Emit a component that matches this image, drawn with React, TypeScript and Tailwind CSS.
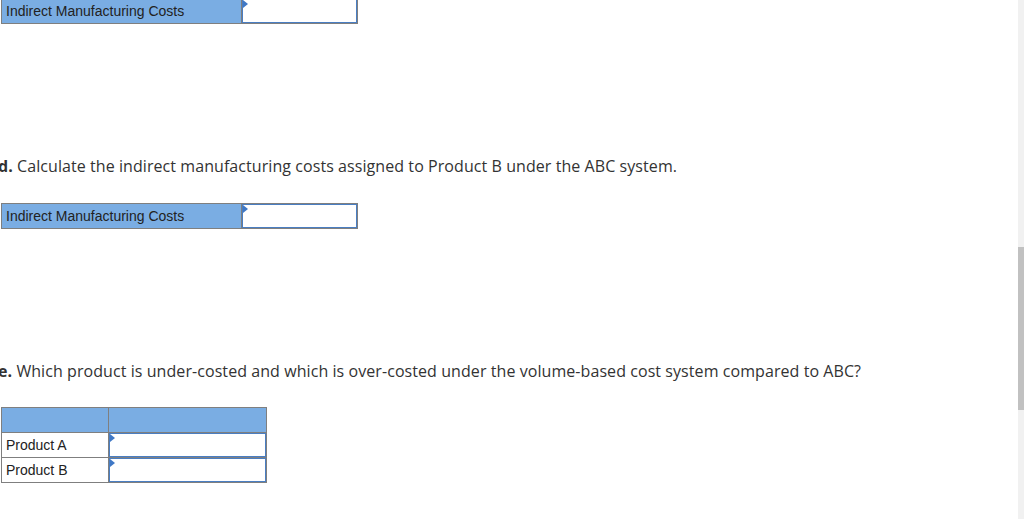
import React from "react";

function InputCell({ className = "" }: { className?: string }) {
  return (
    <td className={`p-0 border border-[#7f7f7f] bg-white ${className}`}>
      <div className="relative h-full w-full border border-[#4a7ec2] bg-white">
        <span className="absolute left-0 top-0 h-0 w-0 border-y-[4px] border-l-[5px] border-y-transparent border-l-[#3f78c6]" />
      </div>
    </td>
  );
}

function SingleRow({ className = "" }: { className?: string }) {
  return (
    <table className={`border-collapse ${className}`} style={{ fontFamily: '"Liberation Sans", Arial, sans-serif' }}>
      <tbody>
        <tr className="h-[25px]">
          <td className="w-[240px] border border-[#7f7f7f] bg-[#7aade3] px-[4px] text-[14px] leading-none text-[#222]">
            Indirect Manufacturing Costs
          </td>
          <InputCell className="w-[116px] h-[25px]" />
        </tr>
      </tbody>
    </table>
  );
}

export default function App() {
  const q = "text-[16px] tracking-[0.07px] text-[#333] leading-5 -ml-[3px]";
  return (
    <div className="flex h-[519px] w-[1024px] overflow-hidden bg-white" style={{ fontFamily: '"Open Sans", "Noto Sans", sans-serif' }}>
      <div className="flex-1 pl-[1px]">
        <SingleRow className="-mt-[2px]" />
        <p className={`${q} mt-[132px]`} style={{ fontFamily: '"Open Sans", sans-serif' }}>
          <b>d.</b> Calculate the indirect manufacturing costs assigned to Product B under the ABC system.
        </p>
        <SingleRow className="mt-[27px]" />
        <p className={`${q} mt-[132px]`} style={{ fontFamily: '"Open Sans", sans-serif' }}>
          <b>e.</b> Which product is under-costed and which is over-costed under the volume-based cost system compared to ABC?
        </p>
        <table className="mt-[26px] border-collapse" style={{ fontFamily: '"Liberation Sans", Arial, sans-serif' }}>
          <tbody>
            <tr className="h-[25px]">
              <td className="w-[107px] border border-[#7f7f7f] bg-[#7aade3]" />
              <td className="w-[158px] border border-[#7f7f7f] bg-[#7aade3]" />
            </tr>
            <tr className="h-[25px]">
              <td className="border border-[#7f7f7f] bg-white px-[4px] text-[14px] leading-none text-[#222]">Product A</td>
              <InputCell className="h-[25px]" />
            </tr>
            <tr className="h-[25px]">
              <td className="border border-[#7f7f7f] bg-white px-[4px] text-[14px] leading-none text-[#222]">Product B</td>
              <InputCell className="h-[25px]" />
            </tr>
          </tbody>
        </table>
      </div>
      <div className="flex w-[6px] flex-col bg-[#f1f1f1]">
        <div className="h-[247px]" />
        <div className="h-[163px] bg-[#c1c1c1]" />
      </div>
    </div>
  );
}
